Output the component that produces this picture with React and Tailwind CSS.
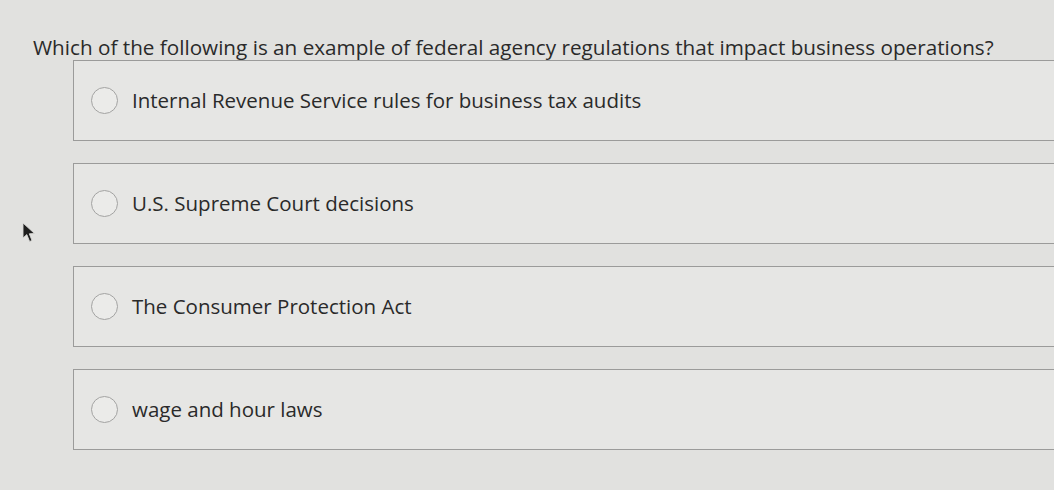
const OPTIONS = [
  'Internal Revenue Service rules for business tax audits',
  'U.S. Supreme Court decisions',
  'The Consumer Protection Act',
  'wage and hour laws',
];

function Cursor() {
  return (
    <svg className="absolute left-[22px] top-[222px]" width="15" height="22" viewBox="0 0 15 22">
      <path d="M1 1 L1 16 L4.8 12.6 L7.6 19.5 L10 18.5 L7.3 11.8 L12.5 11.5 Z"
            fill="#1e1e1e" stroke="#d8d8d6" strokeWidth="0.9" strokeLinejoin="round" />
    </svg>
  );
}

export default function App() {
  return (
    <div className="relative w-[1054px] h-[490px] overflow-hidden bg-[#e1e1df] text-[#2a2a2a]"
         style={{ fontFamily: '"Open Sans", sans-serif' }}>
      <h1 className="pl-[33px] pt-[33px] text-[20.7px] leading-[28px] whitespace-nowrap">
        Which of the following is an example of federal agency regulations that impact business operations?
      </h1>

      <div className="flex flex-col gap-[22px] pl-[73px] -mt-[1px]">
        {OPTIONS.map(text => (
          <label key={text}
                 className="flex items-center gap-[14px] w-[1100px] h-[81px] pl-[17px]
                            border border-[#9b9b9a] bg-[#e6e6e4]">
            <span className="w-[27px] h-[27px] rounded-full border-[1.5px] border-[#a3a3a2] bg-[#ebebe9] shrink-0" />
            <span className="text-[20.5px] leading-none pb-[1px]">{text}</span>
          </label>
        ))}
      </div>

      <Cursor />
    </div>
  );
}
